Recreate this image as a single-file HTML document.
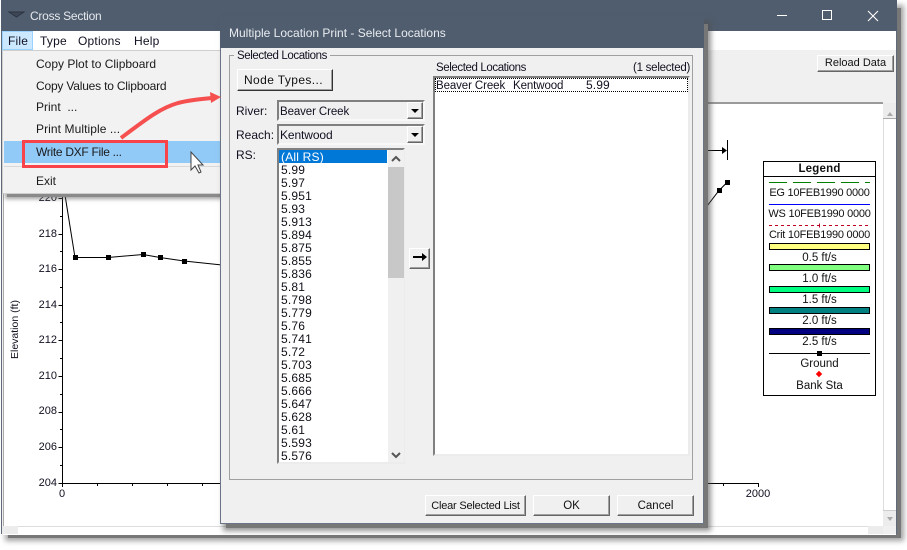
<!DOCTYPE html>
<html><head><meta charset="utf-8"><style>
html,body{margin:0;padding:0}
body{width:907px;height:550px;overflow:hidden;background:#fff;position:relative;font-family:"Liberation Sans",sans-serif;font-size:12px;color:#101020}
div,span{position:absolute;white-space:nowrap;box-sizing:border-box}
.t{line-height:14px}
.n{font-size:11.5px;letter-spacing:-.4px}
.btn{background:#f0f0f0;border:1px solid;border-color:#fff #666 #666 #fff;box-shadow:inset -1px -1px 0 #a0a0a0;text-align:center;color:#111}
.sunk{border:2px solid;border-color:#808080 #f8f8f8 #f8f8f8 #808080;box-shadow:0 0 0 0 #fff}
.li{left:281px;line-height:13px;height:13px;color:#101018;letter-spacing:.2px}
.ar{font-size:11px;left:0;width:33px;text-align:right;line-height:13px}
.lg{left:763px;width:113px;text-align:center;line-height:13px;font-size:11.5px;color:#111}
.lgn{font-size:11px;letter-spacing:-.25px}
.sw{left:769px;width:101px;height:7px;border:1px solid #000}
.m{left:36px;font-size:12px;line-height:15px;color:#1a1a1a}
</style></head><body>

<!-- main window shadow -->
<div style="left:8px;top:8px;width:893px;height:530px;background:#777;box-shadow:0 0 5px 3px rgba(90,90,90,.55)"></div>
<!-- main window -->
<div style="left:1px;top:0;width:896px;height:534px;background:#f0f0f0;border:1px solid #5f6b7a"></div>
<div style="left:1px;top:0;width:896px;height:31px;background:#505d6e"></div>
<svg style="position:absolute;left:8px;top:11px" width="17" height="8"><path d="M1 1H16L8.5 6Z" fill="#3d4757" stroke="#2c3340"/></svg>
<div class="t" style="left:30px;top:9px;color:#e4e8ec;font-size:12px;letter-spacing:-.25px">Cross Section</div>
<div style="left:777px;top:15px;width:10px;height:1px;background:#fff"></div>
<div style="left:822px;top:10px;width:10px;height:10px;border:1px solid #fff"></div>
<svg style="position:absolute;left:867px;top:10px" width="12" height="12"><path d="M1 1L11 11M11 1L1 11" stroke="#fff" stroke-width="1.1"/></svg>

<!-- menu bar -->
<div style="left:2px;top:31px;width:894px;height:19px;background:#fff"></div>
<div style="left:2px;top:31px;width:31px;height:19px;background:#cce8ff;border:1px solid #99d1ff"></div>
<div class="t" style="left:8px;top:34px;letter-spacing:.2px">File</div>
<div class="t" style="left:40px;top:34px;letter-spacing:.2px">Type</div>
<div class="t" style="left:78px;top:34px;letter-spacing:.2px">Options</div>
<div class="t" style="left:134px;top:34px;letter-spacing:.2px">Help</div>

<!-- reload button -->
<div class="btn" style="left:817px;top:55px;width:77px;height:17px;line-height:15px;font-size:11px">Reload Data</div>

<!-- plot area -->
<div style="left:3px;top:102px;width:880px;height:424px;background:#fff;border-top:2px solid #9a9a9a;border-left:1px solid #aaa"></div>
<div style="left:883px;top:103px;width:13px;height:424px;background:#fff;border-left:1px solid #ddd"></div>
<div style="left:883px;top:103px;width:13px;height:16px;background:#ececec;border-bottom:1px solid #aaa"></div>
<div style="left:887px;top:109px;border:3px solid transparent;border-bottom:4px solid #aaa"></div>
<div style="left:883px;top:510px;width:13px;height:16px;background:#ececec;border-top:1px solid #ccc"></div>
<div style="left:887px;top:517px;border:3px solid transparent;border-top:4px solid #aaa"></div>
<div style="left:3px;top:526px;width:893px;height:9px;background:#fff;border-top:1px solid #ddd"></div>
<div style="left:2px;top:526px;width:16px;height:8px;background:#ececec"></div>
<div style="left:868px;top:526px;width:15px;height:8px;background:#ececec"></div>
<div style="left:883px;top:526px;width:13px;height:8px;background:#f0f0f0"></div>

<!-- plot -->
<svg style="position:absolute;left:0;top:0" width="907" height="550">
<path d="M62.500 190V483.500H758M58.500 198.500H62M58.500 234.500H62M60 216.500H62M58.500 269.500H62M60 251.500H62M58.500 305.500H62M60 287.500H62M58.500 340.500H62M60 322.500H62M58.500 376.500H62M60 358.500H62M58.500 412.500H62M60 394.500H62M58.500 447.500H62M60 429.500H62M60 465.500H62M58.500 483.500H62M62.500 483V487M97.500 483V486M132.500 483V486M167.500 483V486M202.500 483V486M723.500 483V486M758.500 483V487" stroke="#000" fill="none" stroke-width="1"/>
<path d="M65 195L75 257.500H108L143 254.500L160 257.500L184 261L222 265" stroke="#000" fill="none"/>
<g fill="#000"><rect x="73" y="255" width="5" height="5"/><rect x="106" y="255" width="5" height="5"/><rect x="141" y="252" width="5" height="5"/><rect x="158" y="255" width="5" height="5"/><rect x="182" y="259" width="5" height="5"/><rect x="717" y="188" width="5" height="5"/><rect x="725" y="180" width="5" height="5"/></g>
<path d="M704 210L719 190.500L727 182.500M703 150.500H726M727.500 140V160" stroke="#000" fill="none"/>
<path d="M722 147L727 150.500L722 154Z" fill="#000"/>
</svg>
<div class="ar" style="top:192px;left:6px;width:51px">220</div>
<div class="ar" style="top:228px;left:6px;width:51px">218</div>
<div class="ar" style="top:263px;left:6px;width:51px">216</div>
<div class="ar" style="top:299px;left:6px;width:51px">214</div>
<div class="ar" style="top:334px;left:6px;width:51px">212</div>
<div class="ar" style="top:370px;left:6px;width:51px">210</div>
<div class="ar" style="top:405px;left:6px;width:51px">208</div>
<div class="ar" style="top:441px;left:6px;width:51px">206</div>
<div class="ar" style="top:477px;left:6px;width:51px">204</div>
<div class="ar" style="top:488px;left:57px;width:10px;text-align:center">0</div>
<div class="ar" style="top:488px;left:740px;width:36px;text-align:center">2000</div>
<div style="left:-13px;top:325px;width:56px;height:12px;line-height:12px;font-size:10.5px;transform:rotate(-90deg);text-align:center">Elevation (ft)</div>

<!-- legend -->
<div style="left:763px;top:161px;width:113px;height:235px;background:#fff;border:1px solid #000"></div>
<div style="left:763px;top:176px;width:113px;height:1px;background:#000"></div>
<div class="lg" style="top:163px;font-weight:bold;letter-spacing:.2px">Legend</div>
<svg style="position:absolute;left:0;top:0" width="907" height="550">
<path d="M769 182.500H870" stroke="#008000" stroke-dasharray="18 6" fill="none"/>
<path d="M769 204.500H870" stroke="#0000ff" fill="none"/>
<path d="M769 225.500H870" stroke="#c00020" stroke-dasharray="3 3" fill="none"/>
<path d="M819.500 223.500V227.500" stroke="#c00020" fill="none"/>
<path d="M769 353.500H870" stroke="#000" fill="none"/>
<rect x="817" y="351" width="5" height="5" fill="#000"/>
<path d="M819 371.500L821.500 374L819 376.500L816.500 374Z" fill="#f00" stroke="#f00"/>
</svg>
<div class="lg lgn" style="top:187px">EG 10FEB1990 0000</div>
<div class="lg lgn" style="top:208px">WS 10FEB1990 0000</div>
<div class="lg lgn" style="top:229px">Crit 10FEB1990 0000</div>
<div class="sw" style="top:243px;background:#ffff80"></div>
<div class="lg" style="top:252px">0.5 ft/s</div>
<div class="sw" style="top:264px;background:#80ff80"></div>
<div class="lg" style="top:273px">1.0 ft/s</div>
<div class="sw" style="top:286px;background:#00ff80"></div>
<div class="lg" style="top:294px">1.5 ft/s</div>
<div class="sw" style="top:307px;background:#008080"></div>
<div class="lg" style="top:315px">2.0 ft/s</div>
<div class="sw" style="top:328px;background:#000080"></div>
<div class="lg" style="top:336px">2.5 ft/s</div>
<div class="lg" style="top:358px">Ground</div>
<div class="lg" style="top:380px">Bank Sta</div>

<!-- File dropdown -->
<div style="left:7px;top:56px;width:217px;height:141px;background:#8a8a8a;box-shadow:0 0 4px 2px rgba(100,100,100,.6)"></div>
<div style="left:2px;top:50px;width:220px;height:144px;background:#f2f2f2;border:1px solid #cfcfcf"></div>
<div style="left:4px;top:141px;width:218px;height:22px;background:#91c9f7"></div>
<div style="left:4px;top:166px;width:218px;height:1px;background:#d8d8d8"></div>
<div class="m" style="top:57px">Copy Plot to Clipboard</div>
<div class="m" style="top:79px;letter-spacing:-.2px">Copy Values to Clipboard</div>
<div class="m" style="top:100px">Print &nbsp;...</div>
<div class="m" style="top:122px;letter-spacing:.08px">Print Multiple ...</div>
<div class="m" style="top:145px;letter-spacing:-.3px">Write DXF File ...</div>
<div class="m" style="top:174px">Exit</div>

<!-- dialog shadow -->
<div style="left:226px;top:24px;width:482px;height:504px;background:#777;box-shadow:0 0 5px 3px rgba(80,80,80,.6)"></div>
<!-- dialog -->
<div style="left:220px;top:17px;width:484px;height:507px;background:#f0f0f0;border:1px solid #6a7585"></div>
<div style="left:220px;top:17px;width:484px;height:31px;background:#505d6e"></div>
<div class="t" style="left:229px;top:26px;color:#e8ecf0;font-size:12px">Multiple Location Print - Select Locations</div>

<!-- group -->
<div style="left:229px;top:55px;width:464px;height:425px;border:1px solid #a0a0a0"></div>
<div class="t n" style="left:234px;top:49px;background:#f0f0f0;padding:0 3px">Selected Locations</div>

<div class="btn" style="left:237px;top:69px;width:94px;height:22px;line-height:20px;letter-spacing:.4px;border-color:#fff #333 #333 #fff;width:96px;padding-right:3px">Node Types...</div>

<div class="t" style="left:236px;top:104px">River:</div>
<div class="t" style="left:236px;top:128px">Reach:</div>
<div class="t" style="left:236px;top:148px">RS:</div>

<div class="sunk" style="left:277px;top:100px;width:148px;height:21px;background:#f0f0f0"></div>
<div class="t n" style="left:280px;top:105px;letter-spacing:-.1px">Beaver Creek</div>
<div class="btn" style="left:407px;top:102px;width:16px;height:17px"></div>
<div style="left:411px;top:109px;border:4px solid transparent;border-top:4px solid #000"></div>
<div class="sunk" style="left:277px;top:124px;width:148px;height:21px;background:#f0f0f0"></div>
<div class="t" style="left:280px;top:128px;letter-spacing:-.1px">Kentwood</div>
<div class="btn" style="left:407px;top:126px;width:16px;height:17px"></div>
<div style="left:411px;top:133px;border:4px solid transparent;border-top:4px solid #000"></div>

<!-- RS list -->
<div style="left:277px;top:148px;width:128px;height:316px;background:#fff;border:2px solid;border-color:#808080 #ececec #ececec #808080"></div>
<div style="left:279px;top:150px;width:108px;height:13px;background:#0078d7"></div>
<div style="left:388px;top:150px;width:16px;height:312px;background:#f0f0f0"></div>
<div style="left:388px;top:167px;width:16px;height:111px;background:#c8c8c8"></div>
<svg style="position:absolute;left:388px;top:150px" width="16" height="312"><path d="M4 11L8 7L12 11M4 303L8 307L12 303" stroke="#555" stroke-width="2" fill="none"/></svg>
<div class="li" style="top:151px;color:#fff">(All RS)</div>
<div class="li" style="top:164px">5.99</div>
<div class="li" style="top:177px">5.97</div>
<div class="li" style="top:190px">5.951</div>
<div class="li" style="top:203px">5.93</div>
<div class="li" style="top:216px">5.913</div>
<div class="li" style="top:229px">5.894</div>
<div class="li" style="top:242px">5.875</div>
<div class="li" style="top:255px">5.855</div>
<div class="li" style="top:268px">5.836</div>
<div class="li" style="top:281px">5.81</div>
<div class="li" style="top:294px">5.798</div>
<div class="li" style="top:307px">5.779</div>
<div class="li" style="top:320px">5.76</div>
<div class="li" style="top:333px">5.741</div>
<div class="li" style="top:346px">5.72</div>
<div class="li" style="top:359px">5.703</div>
<div class="li" style="top:372px">5.685</div>
<div class="li" style="top:385px">5.666</div>
<div class="li" style="top:398px">5.647</div>
<div class="li" style="top:411px">5.628</div>
<div class="li" style="top:424px">5.61</div>
<div class="li" style="top:437px">5.593</div>
<div class="li" style="top:450px;height:12px;overflow:hidden">5.576</div>

<!-- arrow btn -->
<div class="btn" style="left:409px;top:248px;width:21px;height:21px"></div>
<svg style="position:absolute;left:412px;top:251px" width="16" height="12"><path d="M1 6H11" stroke="#000" stroke-width="2"/><path d="M10 2L15 6L10 10Z" fill="#000"/></svg>

<!-- selected list -->
<div class="t n" style="left:436px;top:61px">Selected Locations</div>
<div class="t n" style="left:633px;top:61px;letter-spacing:-.25px">(1 selected)</div>
<div style="left:433px;top:76px;width:257px;height:380px;background:#fff;border:2px solid;border-color:#808080 #ececec #ececec #808080"></div>
<div style="left:435px;top:78px;width:253px;height:14px;border:1px dotted #000"></div>
<div class="t n" style="left:436px;top:79px;letter-spacing:-.1px">Beaver Creek</div>
<div class="t n" style="left:513px;top:79px;letter-spacing:-.1px">Kentwood</div>
<div class="t" style="left:586px;top:78px;letter-spacing:.1px">5.99</div>

<!-- dialog buttons -->
<div class="btn" style="left:425px;top:495px;width:101px;height:21px;line-height:20px;font-size:11px;letter-spacing:-.2px">Clear Selected List</div>
<div class="btn" style="left:533px;top:495px;width:77px;height:21px;line-height:20px;font-size:11.5px">OK</div>
<div class="btn" style="left:617px;top:495px;width:77px;height:21px;line-height:20px;font-size:11.5px">Cancel</div>

<!-- annotations -->
<div style="left:22px;top:140px;width:146px;height:28px;border:3px solid #f8434a"></div>
<svg style="position:absolute;left:0;top:0" width="907" height="550">
<path d="M121 138C145 120 160 108 178 103C190 100 200 99 212 98" stroke="#f5504f" stroke-width="4" fill="none"/>
<path d="M210 92L221 97L211 103Z" fill="#f5504f"/>
<path d="M191 152V170L195 166L199 173L201 172L198 165H203Z" fill="#fff" stroke="#444" stroke-width="1"/>
</svg>
</body></html>
